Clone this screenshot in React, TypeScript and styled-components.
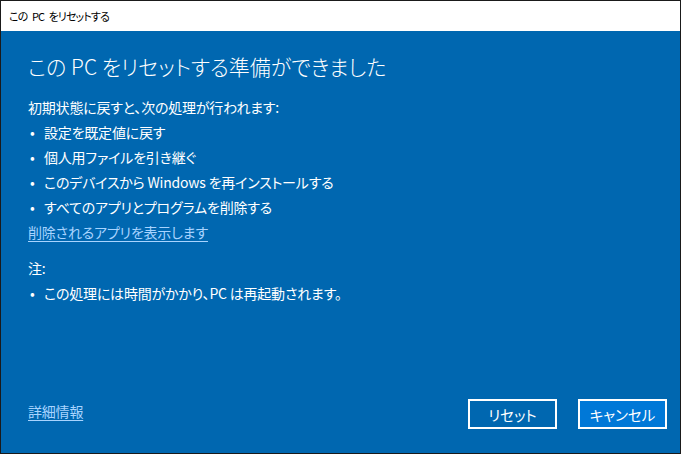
import React from 'react';
import styled, { createGlobalStyle } from 'styled-components';

const GlobalStyle = createGlobalStyle`
    html, body {
        margin: 0;
        padding: 0;
        background: #ffffff;
    }
    body {
        font-family: "Noto Sans CJK JP", "Noto Sans", sans-serif;
        font-feature-settings: "palt";
    }
`

const Window = styled.div`
    width: 681px;
    height: 454px;
    box-sizing: border-box;
    border: 1px solid #1a1a1a;
    display: flex;
    flex-direction: column;
    background: #0067b0;
`

const TitleBar = styled.div`
    height: 30px;
    flex-shrink: 0;
    background: #ffffff;
    color: #000000;
    font-size: 11px;
    letter-spacing: -0.9px;
    word-spacing: 3px;
    display: flex;
    align-items: center;
    padding-left: 8px;
`

const Body = styled.div`
    flex: 1;
    display: flex;
    flex-direction: column;
    padding: 18px 13px 24px 27px;
    color: #ffffff;
`

const Heading = styled.h1`
    margin: 0 0 12px 0;
    font-weight: 300;
    font-size: 21px;
    line-height: 34px;
`

const Paragraph = styled.div`
    font-size: 14px;
    letter-spacing: -0.2px;
    line-height: 25px;
`

const BulletList = styled.ul`
    list-style: none;
    margin: 0;
    padding: 0;
`

const Bullet = styled.li`
    font-size: 14px;
    letter-spacing: -0.2px;
    line-height: 25px;
    display: flex;

    &::before {
        content: "•";
        width: 14px;
        padding-left: 2px;
        flex-shrink: 0;
    }
`

const Link = styled.a`
    font-size: 14px;
    letter-spacing: -0.2px;
    line-height: 25px;
    color: #a8d4ff;
    text-decoration: underline;
    text-underline-offset: 3px;
    cursor: pointer;
    align-self: flex-start;
`

const Note = styled.div`
    margin-top: 11px;
`

const Footer = styled.div`
    margin-top: auto;
    display: flex;
    align-items: center;
    justify-content: space-between;
`

const Buttons = styled.div`
    display: flex;
    gap: 21px;
`

const Button = styled.button<{ $primary?: boolean }>`
    width: 89px;
    height: 30px;
    box-sizing: border-box;
    border: 2px solid #ffffff;
    background: ${p => p.$primary ? '#0078d7' : 'transparent'};
    color: #ffffff;
    font-family: inherit;
    font-feature-settings: "palt";
    font-size: 14.5px;
    padding: 0;
    cursor: pointer;
`

export default function App() {
    return (
        <>
            <GlobalStyle />
            <Window>
                <TitleBar>この PC をリセットする</TitleBar>
                <Body>
                    <Heading>この PC をリセットする準備ができました</Heading>
                    <Paragraph>初期状態に戻すと、次の処理が行われます:</Paragraph>
                    <BulletList>
                        <Bullet>設定を既定値に戻す</Bullet>
                        <Bullet>個人用ファイルを引き継ぐ</Bullet>
                        <Bullet>このデバイスから Windows を再インストールする</Bullet>
                        <Bullet>すべてのアプリとプログラムを削除する</Bullet>
                    </BulletList>
                    <Link>削除されるアプリを表示します</Link>
                    <Note>
                        <Paragraph>注:</Paragraph>
                        <BulletList>
                            <Bullet>この処理には時間がかかり、PC は再起動されます。</Bullet>
                        </BulletList>
                    </Note>
                    <Footer>
                        <Link>詳細情報</Link>
                        <Buttons>
                            <Button>リセット</Button>
                            <Button $primary>キャンセル</Button>
                        </Buttons>
                    </Footer>
                </Body>
            </Window>
        </>
    );
}
